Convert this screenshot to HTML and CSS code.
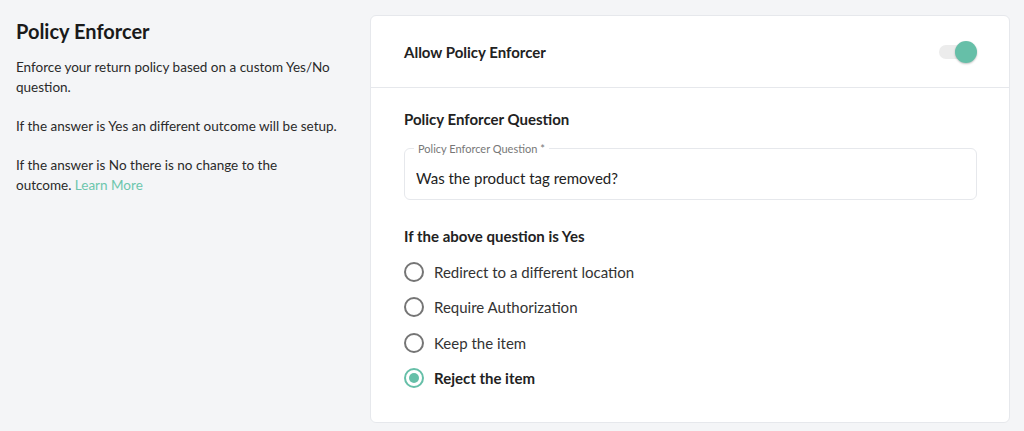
FILE: index.html
```html
<!DOCTYPE html>
<html lang="en">
<head>
  <meta charset="UTF-8" />
  <meta name="viewport" content="width=device-width, initial-scale=1.0"/>
  <title>Policy Enforcer</title>
  <link rel="stylesheet" href="styles.css">
</head>
<body>
  <div class="layout">
    <div class="intro">
      <h2>Policy Enforcer</h2>
      <p>Enforce your return policy based on a custom Yes/No question.</p>
      <p>If the answer is Yes an different outcome will be setup.</p>
      <p>If the answer is No there is no change to the<br>outcome. <a href="#" class="learn-more">Learn More</a></p>
    </div>

    <div class="card">
      <div class="card-header">
        <span class="card-title">Allow Policy Enforcer</span>
        <label class="switch">
          <input type="checkbox" checked />
          <span class="track"></span>
          <span class="thumb"></span>
        </label>
      </div>

      <div class="card-body">
        <h3 class="section-title">Policy Enforcer Question</h3>
        <fieldset class="outlined">
          <legend>Policy Enforcer Question *</legend>
          <input type="text" value="Was the product tag removed?" />
        </fieldset>

        <h3 class="section-title second">If the above question is Yes</h3>
        <div class="options">
          <label class="option"><input type="radio" name="outcome" value="redirect" /><span class="dot"></span>Redirect to a different location</label>
          <label class="option"><input type="radio" name="outcome" value="auth" /><span class="dot"></span>Require Authorization</label>
          <label class="option"><input type="radio" name="outcome" value="keep" /><span class="dot"></span>Keep the item</label>
          <label class="option"><input type="radio" name="outcome" value="reject" checked /><span class="dot"></span>Reject the item</label>
        </div>
      </div>
    </div>
  </div>
</body>
</html>
```

FILE: styles.css
```css
body {
  font-family: Lato, "Open Sans", sans-serif;
  margin: 0;
  padding: 0;
  background: #f4f5f7;
  color: #222;
}

.layout {
  display: grid;
  grid-template-columns: 354px 1fr;
  padding: 15px 14px 0 16px;
}

.intro h2 {
  font-size: 20px;
  font-weight: 700;
  margin: 4px 0 14px;
  color: #1a1a1a;
}

.intro p {
  font-size: 13.5px;
  line-height: 20px;
  margin: 0 0 19px;
  max-width: 326px;
  color: #2a2a2a;
}

.learn-more {
  color: #6cc6ad;
  text-decoration: none;
}

.card {
  background: #fff;
  border: 1px solid #e6e8ec;
  border-radius: 6px;
  height: 408px;
  box-sizing: border-box;
}

.card-header {
  display: flex;
  align-items: center;
  justify-content: space-between;
  height: 71px;
  padding: 0 32px 0 33px;
  border-bottom: 1px solid #e6e8ec;
}

.card-title {
  font-size: 15px;
  font-weight: 700;
  color: #222;
}

.switch {
  position: relative;
  width: 38px;
  height: 24px;
  display: inline-block;
}

.switch input {
  display: none;
}

.track {
  position: absolute;
  left: 0;
  top: 5px;
  width: 34px;
  height: 14px;
  border-radius: 7px;
  background: #ececec;
}

.thumb {
  position: absolute;
  right: 0;
  top: 1px;
  width: 22px;
  height: 22px;
  border-radius: 50%;
  background: #66bfa8;
  box-shadow: 0 1px 2px rgba(0, 0, 0, 0.25);
}

.card-body {
  padding: 22px 32px 0 33px;
}

.section-title {
  font-size: 15px;
  font-weight: 700;
  margin: 0 0 14px;
  color: #222;
}

.section-title.second {
  margin: 27px 0 9px;
}

.outlined {
  margin: 0;
  padding: 0 12px 0 11px;
  border: 1px solid #e6e8ec;
  border-radius: 6px;
  height: 58px;
  box-sizing: border-box;
}

.outlined legend {
  font-size: 11px;
  color: #777;
  padding: 0 4px;
  margin-left: -2px;
}

.outlined input {
  border: none;
  outline: none;
  font-family: inherit;
  font-size: 15px;
  color: #222;
  padding: 0;
  margin-top: 14px;
  width: 100%;
  background: transparent;
}

.options {
  display: flex;
  flex-direction: column;
}

.option {
  display: flex;
  align-items: center;
  height: 35.5px;
  font-size: 15px;
  color: #333;
  cursor: pointer;
}

.option input {
  display: none;
}

.dot {
  width: 20px;
  height: 20px;
  border: 2px solid #757575;
  border-radius: 50%;
  box-sizing: border-box;
  margin-right: 10px;
  position: relative;
}

.option input:checked + .dot {
  border-color: #66bfa8;
}

.option input:checked + .dot::after {
  content: "";
  position: absolute;
  left: 3px;
  top: 3px;
  width: 10px;
  height: 10px;
  border-radius: 50%;
  background: #66bfa8;
}

.option:has(input:checked) {
  font-weight: 700;
  color: #222;
}
```
